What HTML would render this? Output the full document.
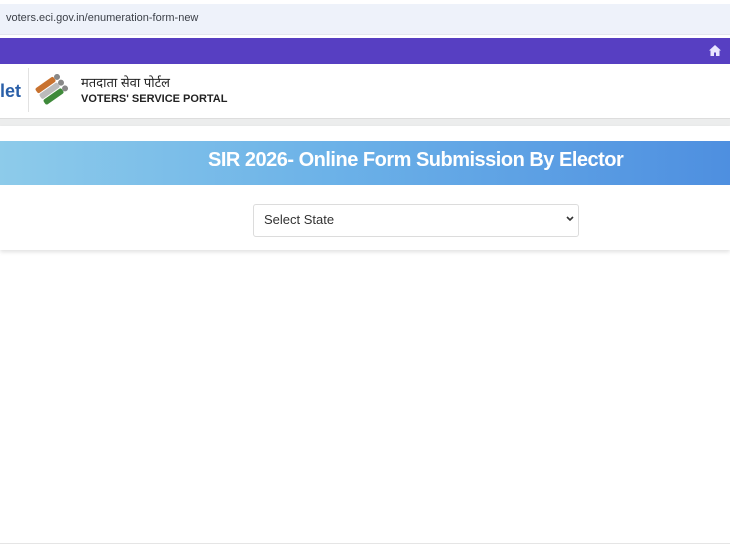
<!DOCTYPE html>
<html><head><style>
body{margin:0;width:730px;height:548px;background:#fff;font-family:"Liberation Sans","Noto Sans CJK SC",sans-serif;position:relative;overflow:hidden}
.a{position:absolute}
</style></head><body>
<div class="a" style="left:0;top:0;width:730px;height:4px;background:#fff"></div>
<div class="a" style="left:0;top:4px;width:730px;height:30px;background:#eef2fa;border-bottom:1px solid #e3e6ee"></div>
<div class="a" style="left:6px;top:12px;font-size:11px;color:#3c4048">voters.eci.gov.in/enumeration-form-new</div>
<div class="a" style="left:0;top:38px;width:730px;height:26px;background:#573fc2"></div>
<svg class="a" style="left:709px;top:45px" width="12" height="11" viewBox="0 0 12 11"><path d="M6 0L0 5.5h1.5V11h3.5V7.5h2V11h3.5V5.5H12z" fill="#e8e4ff"/></svg>
<div class="a" style="left:0;top:81px;font-size:18px;font-weight:bold;color:#2a5fa8">let</div>
<div class="a" style="left:28px;top:68px;width:1px;height:44px;background:#e2e2e2"></div>
<svg class="a" style="left:34px;top:72px" width="36" height="34" viewBox="0 0 36 34">
<g transform="rotate(-35 18 17)"><rect x="4" y="7" width="22" height="6" fill="#c8722f" rx="2"/><rect x="4" y="14" width="22" height="6" fill="#bbb" rx="2"/><rect x="4" y="21" width="22" height="6" fill="#3f8a3a" rx="2"/><circle cx="29" cy="10" r="3" fill="#888"/><circle cx="29" cy="17" r="3" fill="#888"/><circle cx="29" cy="24" r="3" fill="#888"/></g></svg>
<div class="a" style="left:81px;top:73px;font-size:13px;color:#222">मतदाता सेवा पोर्टल</div>
<div class="a" style="left:81px;top:93px;font-size:11px;font-weight:bold;color:#222">VOTERS' SERVICE PORTAL</div>
<div class="a" style="left:0;top:118px;width:730px;height:8px;background:#eceded;border-top:1px solid #ddd"></div>
<div class="a" style="left:0;top:126px;width:730px;height:124px;background:#fff;box-shadow:0 2px 4px rgba(0,0,0,.12)"></div>
<div class="a" style="left:0;top:141px;width:730px;height:44px;background:linear-gradient(90deg,#8dcbea,#6cb2e8 45%,#4e8fe0)"></div>
<div class="a" style="left:208px;top:149px;font-size:20px;font-weight:bold;color:#fff;letter-spacing:-.5px">SIR 2026- Online Form Submission By Elector</div>
<div class="a" style="left:253px;top:204px;width:324px;height:31px;border:1px solid #dcdcdc;border-radius:3px;background:#fff"></div>
<div class="a" style="left:264px;top:212px;font-size:13px;color:#333">Select State</div>
<svg class="a" style="left:566px;top:216px" width="8" height="6" viewBox="0 0 8 6"><path d="M1 1l3 3 3-3" stroke="#333" stroke-width="1.6" fill="none"/></svg>
<div class="a" style="left:0;top:543px;width:730px;height:1px;background:#e5e5e5"></div>
</body></html>
